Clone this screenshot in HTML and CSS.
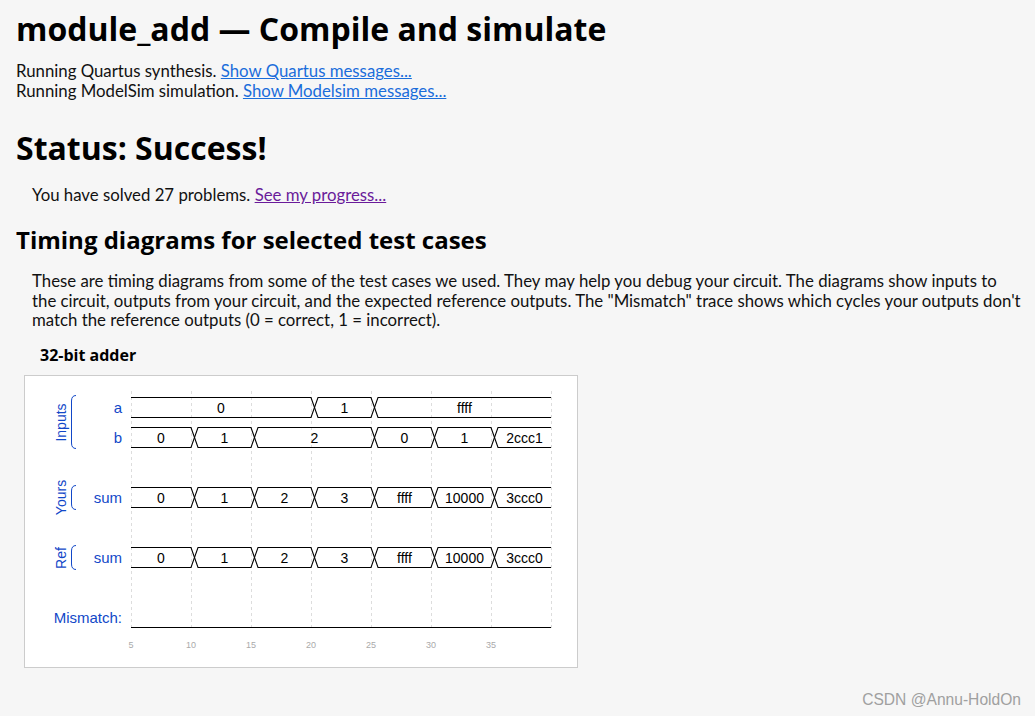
FILE: index.html
```html
<!DOCTYPE html>
<html>
<head>
<meta charset="utf-8">
<title>module_add — Compile and simulate</title>
<link rel="stylesheet" href="styles.css">
</head>
<body>
<h1 class="title">module_add — Compile and simulate</h1>
<div class="runs">
  <div>Running Quartus synthesis. <a class="link" href="#">Show Quartus messages...</a></div>
  <div>Running ModelSim simulation. <a class="link" href="#">Show Modelsim messages...</a></div>
</div>
<h1 class="status">Status: Success!</h1>
<p class="solved">You have solved 27 problems. <a class="link visited" href="#">See my progress...</a></p>
<h2 class="timing">Timing diagrams for selected test cases</h2>
<p class="desc">These are timing diagrams from some of the test cases we used. They may help you debug your circuit. The diagrams show inputs to<br>the circuit, outputs from your circuit, and the expected reference outputs. The "Mismatch" trace shows which cycles your outputs don't<br>match the reference outputs (0 = correct, 1 = incorrect).</p>
<h3 class="case">32-bit adder</h3>
<div class="diagram">
<svg width="552" height="291" viewBox="25 376 552 291" xmlns="http://www.w3.org/2000/svg">
  <g class="grid">
    <line x1="131.5" y1="391" x2="131.5" y2="628"/>
    <line x1="191.5" y1="391" x2="191.5" y2="628"/>
    <line x1="251.5" y1="391" x2="251.5" y2="628"/>
    <line x1="311.5" y1="391" x2="311.5" y2="628"/>
    <line x1="371.5" y1="391" x2="371.5" y2="628"/>
    <line x1="431.5" y1="391" x2="431.5" y2="628"/>
    <line x1="491.5" y1="391" x2="491.5" y2="628"/>
    <line x1="551.5" y1="391" x2="551.5" y2="628"/>
  </g>
  <g class="axis">
    <text x="131" y="648">5</text>
    <text x="191" y="648">10</text>
    <text x="251" y="648">15</text>
    <text x="311" y="648">20</text>
    <text x="371" y="648">25</text>
    <text x="431" y="648">30</text>
    <text x="491" y="648">35</text>
  </g>
  <g class="groups">
    <text transform="translate(65.5 422.5) rotate(-90)">Inputs</text>
    <text transform="translate(65.5 497.5) rotate(-90)">Yours</text>
    <text transform="translate(65.5 558) rotate(-90)">Ref</text>
    <path class="brace" d="M76,395.5 Q71.5,395.5 71.5,401 V443 Q71.5,448.5 76,448.5"/>
    <path class="brace" d="M76,485.5 Q71.5,485.5 71.5,491 V504 Q71.5,509.5 76,509.5"/>
    <path class="brace" d="M76,545.5 Q71.5,545.5 71.5,551 V564 Q71.5,569.5 76,569.5"/>
  </g>
  <g class="names">
    <text x="122" y="413">a</text>
    <text x="122" y="443">b</text>
    <text x="122" y="503">sum</text>
    <text x="122" y="563">sum</text>
    <text x="122" y="623">Mismatch:</text>
  </g>
  <g class="wave">
    <path d="M131,397.5 H311 L318,417.5 H371 L378,397.5 H551"/>
    <path d="M131,417.5 H311 L318,397.5 H371 L378,417.5 H551"/>

    <path d="M131,427.5 H191 L198,447.5 H251 L258,427.5 H371 L378,447.5 H431 L438,427.5 H491 L498,447.5 H551"/>
    <path d="M131,447.5 H191 L198,427.5 H251 L258,447.5 H371 L378,427.5 H431 L438,447.5 H491 L498,427.5 H551"/>

    <path d="M131,487.5 H191 L198,507.5 H251 L258,487.5 H311 L318,507.5 H371 L378,487.5 H431 L438,507.5 H491 L498,487.5 H551"/>
    <path d="M131,507.5 H191 L198,487.5 H251 L258,507.5 H311 L318,487.5 H371 L378,507.5 H431 L438,487.5 H491 L498,507.5 H551"/>

    <path d="M131,547.5 H191 L198,567.5 H251 L258,547.5 H311 L318,567.5 H371 L378,547.5 H431 L438,567.5 H491 L498,547.5 H551"/>
    <path d="M131,567.5 H191 L198,547.5 H251 L258,567.5 H311 L318,547.5 H371 L378,567.5 H431 L438,547.5 H491 L498,567.5 H551"/>

    <path d="M131,627.5 H551"/>
  </g>
  <g class="vals">
    <text x="221" y="413">0</text>
    <text x="344.5" y="413">1</text>
    <text x="464.5" y="413">ffff</text>

    <text x="161" y="443">0</text>
    <text x="224.5" y="443">1</text>
    <text x="314.5" y="443">2</text>
    <text x="404.5" y="443">0</text>
    <text x="464.5" y="443">1</text>
    <text x="524.5" y="443">2ccc1</text>

    <text x="161" y="503">0</text>
    <text x="224.5" y="503">1</text>
    <text x="284.5" y="503">2</text>
    <text x="344.5" y="503">3</text>
    <text x="404.5" y="503">ffff</text>
    <text x="464.5" y="503">10000</text>
    <text x="524.5" y="503">3ccc0</text>

    <text x="161" y="563">0</text>
    <text x="224.5" y="563">1</text>
    <text x="284.5" y="563">2</text>
    <text x="344.5" y="563">3</text>
    <text x="404.5" y="563">ffff</text>
    <text x="464.5" y="563">10000</text>
    <text x="524.5" y="563">3ccc0</text>
  </g>
</svg>
</div>
<div class="watermark">CSDN @Annu-HoldOn</div>
</body>
</html>
```
FILE: styles.css
```css
html, body {
  margin: 0;
  padding: 0;
}
body {
  background: #f6f6f6;
  color: #111;
  font-family: Lato, "Open Sans", sans-serif;
  font-size: 16.8px;
  line-height: 19.5px;
  padding: 0 16px;
  position: relative;
  min-height: 716px;
  box-sizing: border-box;
}
.title, .status, .timing, .case {
  font-family: "Open Sans", sans-serif;
  font-weight: 700;
  color: #000;
  line-height: 1.2;
}
.title {
  font-size: 32px;
  margin: 10px 0 0 0;
}
.runs {
  margin-top: 13px;
}
.status {
  font-size: 32px;
  margin: 29px 0 0 0;
}
.solved {
  margin: 17.5px 0 0 16px;
}
.timing {
  font-size: 24px;
  margin: 21.5px 0 0 0;
}
.desc {
  margin: 16.3px 0 0 16px;
  white-space: nowrap;
}
.case {
  font-size: 16px;
  line-height: 20px;
  margin: 15.5px 0 0 24px;
}
.link {
  color: #1a6ddb;
  text-decoration: underline;
}
.link.visited {
  color: #6a1b9a;
}
.diagram {
  margin: 9.5px 0 0 8px;
  width: 552px;
  height: 291px;
  border: 1px solid #cccccc;
  background: #ffffff;
}
.diagram svg {
  display: block;
}
.grid line {
  stroke: #dddddd;
  stroke-width: 1;
  stroke-dasharray: 3 3;
}
.axis text {
  font-family: "Liberation Sans", Arial, sans-serif;
  font-size: 9px;
  fill: #aaaaaa;
  text-anchor: middle;
}
.groups text {
  font-family: "Liberation Sans", Arial, sans-serif;
  font-size: 14px;
  fill: #1248c8;
  text-anchor: middle;
}
.brace {
  fill: none;
  stroke: #1248c8;
  stroke-width: 1;
}
.names text {
  font-family: "Liberation Sans", Arial, sans-serif;
  font-size: 15px;
  fill: #1248c8;
  text-anchor: end;
}
.wave path {
  fill: none;
  stroke: #000;
  stroke-width: 1.1;
}
.vals text {
  font-family: "Liberation Sans", Arial, sans-serif;
  font-size: 14px;
  fill: #000;
  text-anchor: middle;
}
.watermark {
  position: absolute;
  right: 14px;
  bottom: 7px;
  font-family: "Liberation Sans", Arial, sans-serif;
  font-size: 15.6px;
  color: #a0a0a0;
}
```
